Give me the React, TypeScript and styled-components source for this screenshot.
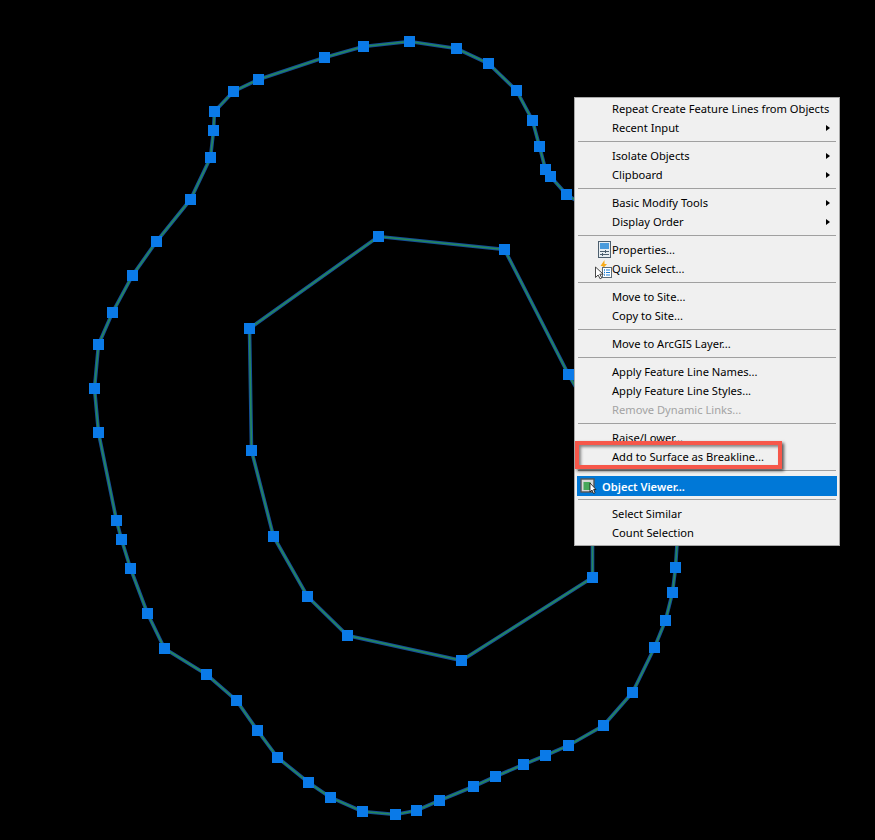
import React from "react";
import styled, { createGlobalStyle } from "styled-components";

const GlobalStyle = createGlobalStyle`
  html, body {
    margin: 0;
    padding: 0;
    background: #000;
  }
`;

const Viewport = styled.div`
  position: relative;
  width: 875px;
  height: 840px;
  overflow: hidden;
  background: #000;
`;

const Drawing = styled.svg`
  display: block;
`;

const Menu = styled.div`
  position: absolute;
  left: 574px;
  top: 97px;
  width: 266px;
  box-sizing: border-box;
  display: flex;
  flex-direction: column;
  padding: 1px 2px 3px;
  background: #f0f0f0;
  border: 1px solid #a8a8a8;
  font-family: "Noto Sans", "Liberation Sans", sans-serif;
  font-size: 11.15px;
  color: #000;
`;

const Row = styled.div<{ $disabled?: boolean }>`
  display: grid;
  grid-template-columns: 35px 1fr auto;
  align-items: center;
  height: 19px;
  padding-right: 7px;
  white-space: nowrap;
  color: ${(p) => (p.$disabled ? "#a3a3a3" : "#000")};
`;

const ActiveRow = styled.div`
  display: grid;
  grid-template-columns: 25px 1fr;
  align-items: center;
  height: 20px;
  margin-top: 5px;
  background: #0078d7;
  color: #fff;
  font-weight: 600;
  white-space: nowrap;
`;

const Separator = styled.div<{ $before?: number; $after?: number }>`
  flex: none;
  height: 1px;
  margin: ${(p) => p.$before ?? 4}px 1px ${(p) => p.$after ?? 4}px 1px;
  background: #a0a0a0;
`;

const Arrow = styled.span`
  border-left: 4px solid #000;
  border-top: 3.5px solid transparent;
  border-bottom: 3.5px solid transparent;
`;

const RowIcon = styled.span`
  display: flex;
  justify-content: flex-end;
  align-items: center;
  height: 19px;
`;

const ActiveIcon = styled.span`
  display: flex;
  align-items: center;
  padding-left: 3px;
`;

const Highlight = styled.div`
  position: absolute;
  left: 575px;
  top: 441px;
  width: 207px;
  height: 28px;
  box-sizing: border-box;
  border: 4px solid #f6574a;
  box-shadow: 2px 2px 3px rgba(0, 0, 0, 0.65), inset 2px 2px 3px rgba(0, 0, 0, 0.45);
`;

type Pt = [number, number];

const outer: Pt[] = [
  [595, 212], [566, 194], [550, 176], [545, 169], [539, 146], [532, 120], [516, 90], [488, 63],
  [456, 48], [409, 41], [363, 46], [324, 57], [258, 79], [233, 91], [214, 111], [213, 130],
  [210, 157], [190, 199], [156, 241], [132, 275], [112, 312], [98, 344], [94, 388], [98, 432],
  [116, 520], [121, 539], [130, 568], [147, 613], [164, 648], [206, 674], [236, 700], [257, 730],
  [277, 757], [308, 782], [330, 797], [362, 811], [395, 814], [416, 810], [439, 800], [473, 786],
  [495, 776], [523, 764], [545, 755], [568, 745], [603, 725], [632, 692], [654, 647], [665, 620],
  [672, 592], [675, 567], [678, 520],
];

const inner: Pt[] = [
  [592, 520], [592, 577], [461, 660], [347, 635], [307, 596], [273, 536], [251, 450], [249, 328],
  [378, 236], [504, 249], [568, 374], [600, 430],
];

const toPoints = (pts: Pt[]) => pts.map(([x, y]) => `${x + 0.5},${y + 0.5}`).join(" ");

const FeatureLine = ({ pts }: { pts: Pt[] }) => (
  <g>
    <polyline points={toPoints(pts)} fill="none" stroke="#14509a" strokeWidth={3.6} />
    <polyline points={toPoints(pts)} fill="none" stroke="#25885a" strokeWidth={1.6} />
    {pts.map(([x, y]) => (
      <rect key={`${x}-${y}`} x={x - 5} y={y - 5} width={11} height={11} fill="#0a7ae8" />
    ))}
  </g>
);

const PropertiesIcon = () => (
  <svg width="14" height="17" viewBox="0 0 14 17">
    <rect x="0.5" y="0.5" width="12" height="16" fill="#e8eef2" stroke="#4d5f6e" />
    <rect x="2" y="2" width="9" height="6" fill="#4a9bdc" />
    <path d="M2 10.5h9M2 13.5h9" stroke="#4d5f6e" />
    <path d="M7.5 9v3M4.5 12v3" stroke="#4d5f6e" />
  </svg>
);

const QuickSelectIcon = () => (
  <svg width="17" height="20" viewBox="0 0 17 20" style={{ overflow: "visible" }}>
    <path d="M9.5 1L5.5 7h2.5L6.5 11l5.5-6H9.5z" fill="#f7ab1a" />
    <rect x="7.5" y="8.5" width="9" height="10" fill="#fff" stroke="#5c6c78" />
    <path d="M9 11h1M9 13.5h1M9 16h1" stroke="#1c7fd6" strokeWidth={1.4} />
    <path d="M11 11h4M11 13.5h4M11 16h4" stroke="#1c7fd6" strokeWidth={1.2} />
    <path d="M0.5 8v10.5l2.6-2.5 2 3.8 1.7-.9-2-3.7h3.4z" fill="#fff" stroke="#333" strokeWidth={0.9} />
  </svg>
);

const ViewerIcon = () => (
  <svg width="17" height="17" viewBox="0 0 17 17">
    <rect x="1" y="1" width="13" height="13" fill="#d8d8d8" stroke="#555" strokeWidth={1.4} />
    <rect x="3.5" y="4" width="7" height="8" fill="#47a85a" />
    <path d="M10 5v9l2-2 1.5 3.5 1.6-.8L13.6 11.5H16z" fill="#fff" stroke="#111" strokeWidth={0.8} />
  </svg>
);

type Item = { label: string; sub?: boolean; disabled?: boolean; icon?: React.ReactNode };

const groups: Item[][] = [
  [{ label: "Repeat Create Feature Lines from Objects" }, { label: "Recent Input", sub: true }],
  [{ label: "Isolate Objects", sub: true }, { label: "Clipboard", sub: true }],
  [{ label: "Basic Modify Tools", sub: true }, { label: "Display Order", sub: true }],
  [
    { label: "Properties...", icon: <PropertiesIcon /> },
    { label: "Quick Select...", icon: <QuickSelectIcon /> },
  ],
  [{ label: "Move to Site..." }, { label: "Copy to Site..." }],
  [{ label: "Move to ArcGIS Layer..." }],
  [
    { label: "Apply Feature Line Names..." },
    { label: "Apply Feature Line Styles..." },
    { label: "Remove Dynamic Links...", disabled: true },
  ],
  [{ label: "Raise/Lower..." }, { label: "Add to Surface as Breakline..." }],
];

const MenuRow = ({ item }: { item: Item }) => (
  <Row $disabled={item.disabled}>
    <RowIcon>{item.icon}</RowIcon>
    <span>{item.label}</span>
    {item.sub && <Arrow />}
  </Row>
);

export default function App() {
  return (
    <Viewport>
      <GlobalStyle />
      <Drawing width={875} height={840} viewBox="0 0 875 840">
        <FeatureLine pts={outer} />
        <FeatureLine pts={inner} />
      </Drawing>
      <Menu>
        {groups.map((group, i) => (
          <React.Fragment key={i}>
            {group.map((item) => (
              <MenuRow key={item.label} item={item} />
            ))}
            <Separator $after={i === groups.length - 1 ? 0 : 4} />
          </React.Fragment>
        ))}
        <ActiveRow>
          <ActiveIcon>
            <ViewerIcon />
          </ActiveIcon>
          <span>Object Viewer...</span>
        </ActiveRow>
        <Separator $before={3} />
        <MenuRow item={{ label: "Select Similar" }} />
        <MenuRow item={{ label: "Count Selection" }} />
      </Menu>
      <Highlight />
    </Viewport>
  );
}
